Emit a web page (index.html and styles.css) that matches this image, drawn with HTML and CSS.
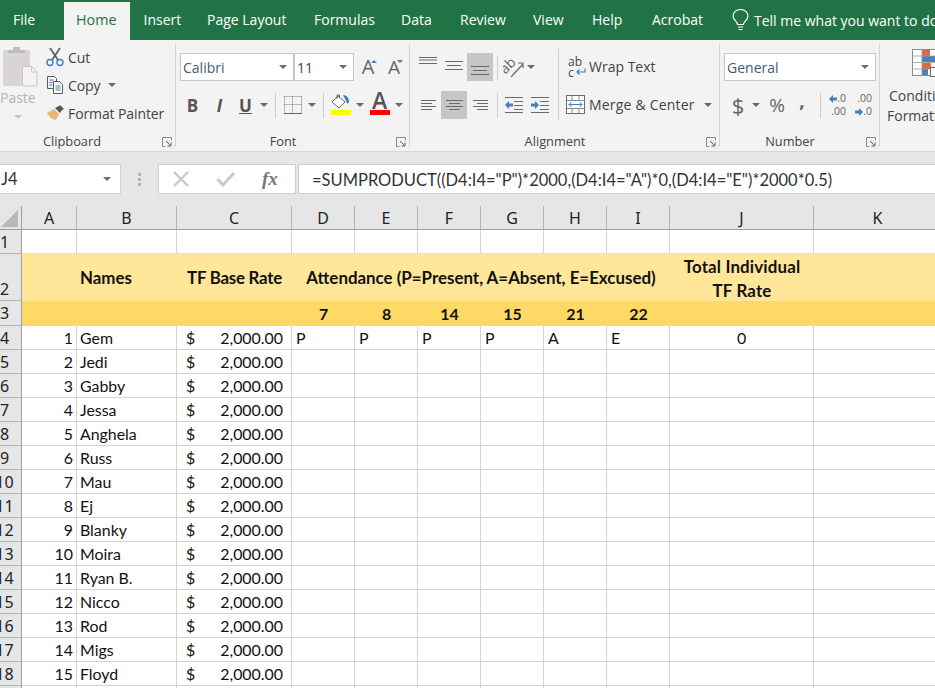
FILE: index.html
```html
<!DOCTYPE html>
<html lang="en">
<head>
<meta charset="utf-8">
<title>Excel attendance sheet</title>
<link rel="stylesheet" href="styles.css">
</head>
<body>
<div class="app">
  <nav class="tabs">
    <span class="tab tab-file">File</span>
    <span class="tab tab-active">Home</span>
    <span class="tab">Insert</span>
    <span class="tab">Page Layout</span>
    <span class="tab">Formulas</span>
    <span class="tab">Data</span>
    <span class="tab">Review</span>
    <span class="tab">View</span>
    <span class="tab">Help</span>
    <span class="tab">Acrobat</span>
    <span class="tell">
      <svg width="17" height="22" viewBox="0 0 17 22" fill="none" stroke="#fff" stroke-width="1.2"><path d="M5.500 15.500c0-3-4.500-4.500-4.500-8.500a7.500 6.500 0 0 1 15 0c0 4-4.500 5.500-4.500 8.500z"/><path d="M6 18h5M6.500 20.500h4"/></svg>
      <span>Tell me what you want to do</span>
    </span>
  </nav>

  <section class="ribbon">
    <div class="group group-clip">
      <div class="group-body clip-body">
        <div class="paste">
          <svg width="36" height="40" viewBox="0 0 36 40"><rect x="0" y="3" width="27" height="36" rx="2" fill="#d9d5d7"/><path d="M5 6V3h5V0h7v3h5v3z" fill="#bdbbbc"/><path d="M19.500 19.500h9l5.500 5.500v14h-14.500z" fill="#f4f0f6" stroke="#c9c9c9"/><path d="M28.500 19.500v5.500h5.500" fill="none" stroke="#c9c9c9"/></svg>
          <span class="paste-label">Paste</span>
          <i class="caret caret-pale"></i>
        </div>
        <div class="clip-list">
          <div class="clip-item">
            <svg width="18" height="20" viewBox="0 0 18 20" fill="none"><path d="M4 1l8 12M14 1L6 13" stroke="#5a5a5a" stroke-width="1.600"/><circle cx="4" cy="15.500" r="3" stroke="#3f7ebf" stroke-width="1.400"/><circle cx="14" cy="15.500" r="3" stroke="#3f7ebf" stroke-width="1.400"/></svg>
            <span>Cut</span>
          </div>
          <div class="clip-item">
            <svg width="18" height="20" viewBox="0 0 18 20" fill="none"><path d="M1.500 1.500h7l2 2v10h-9z" fill="#f3f3f3" stroke="#5a5a5a"/><path d="M7.500 6.500h6l3 3v9h-9z" fill="#fff" stroke="#5a5a5a"/><path d="M3.500 5h4M3.500 7.500h3M3.500 10h3M9.500 11h5M9.500 13h5M9.500 15h5" stroke="#3f7ebf"/></svg>
            <span>Copy</span><i class="caret caret-copy"></i>
          </div>
          <div class="clip-item">
            <svg width="18" height="16" viewBox="0 0 18 16"><path d="M1 8l7-4 5 5-3 6c-3 0-7-3-9-7z" fill="#e8b676"/><path d="M9 3l4-2 1-1 4 4-2 1-2 3z" fill="#555"/></svg>
            <span>Format Painter</span>
          </div>
        </div>
      </div>
      <div class="group-foot foot-clip"><span class="foot-label">Clipboard</span><svg class="launcher" width="10" height="10" viewBox="0 0 10 10" fill="none"><path d="M9.500 3.500V.5H.5v9h3" stroke="#8a8a8a"/><path d="M4 4l4 4M9 5.500V9H5.500" stroke="#5a5a5a"/></svg></div>
    </div>

    <div class="group group-font">
      <div class="group-body rows">
        <div class="font-pick">
          <div class="combo combo-name"><span>Calibri</span><i class="caret"></i></div>
          <div class="combo combo-size"><span>11</span><i class="caret"></i></div>
          <span class="size-btn"><span class="size-a">A</span><i class="mini mini-up"></i></span>
          <span class="size-btn size-btn-2"><span class="size-a size-a-small">A</span><i class="mini mini-down"></i></span>
        </div>
        <div class="font-tools">
          <span class="cell-c glyph glyph-b">B</span>
          <span class="cell-c glyph glyph-i">I</span>
          <span class="cell-c glyph glyph-u">U</span>
          <span class="cell-c"><i class="caret"></i></span>
          <span class="cell-c"><i class="sep"></i></span>
          <span class="cell-c">
            <svg width="18" height="18" viewBox="0 0 18 18" fill="none"><path d="M.5.5h17M.5 8.500h17M.5.5v17M8.500.5v17M17.500.5v17" stroke="#777" stroke-dasharray="1 1"/><path d="M0 17.500h18" stroke="#666"/></svg>
          </span>
          <span class="cell-c"><i class="caret"></i></span>
          <span class="cell-c"><i class="sep"></i></span>
          <span class="cell-c color-tool">
            <svg width="20" height="15" viewBox="0 0 20 15" fill="none"><path d="M1 8l6-6 7 6-6 6z" fill="#fff" stroke="#666"/><path d="M6 5V1h2.500v3" stroke="#666"/><path d="M12 1c4 0 6 3 6 7-1 2-2 2-2.500 0L14 5z" fill="#3f7ebf"/></svg>
            <i class="color-bar bar-yellow"></i>
          </span>
          <span class="cell-c"><i class="caret"></i></span>
          <span class="cell-c color-tool">
            <span class="glyph-a">A</span>
            <i class="color-bar bar-red"></i>
          </span>
          <span class="cell-c"><i class="caret"></i></span>
        </div>
      </div>
      <div class="group-foot"><span class="foot-label">Font</span><svg class="launcher" width="10" height="10" viewBox="0 0 10 10" fill="none"><path d="M9.500 3.500V.5H.5v9h3" stroke="#8a8a8a"/><path d="M4 4l4 4M9 5.500V9H5.500" stroke="#5a5a5a"/></svg></div>
    </div>

    <div class="group group-align">
      <div class="group-body align-body">
        <div class="rows align-left">
          <div class="align-tools">
            <span class="cell-c align-top"><svg width="18" height="8" viewBox="0 0 18 8"><path d="M0 .5h18M0 3h18M0 6.500h18" stroke="#6a6a6a"/></svg></span>
            <span class="cell-c align-mid"><svg width="18" height="10" viewBox="0 0 18 10"><path d="M0 .5h18M2 4.500h14M0 8.500h18" stroke="#6a6a6a"/></svg></span>
            <span class="cell-c on align-bot"><svg width="18" height="10" viewBox="0 0 18 10"><path d="M0 .5h18M2 4.500h14M0 8.500h18" stroke="#6a6a6a"/></svg></span>
            <span class="cell-c"><i class="sep"></i></span>
            <span class="cell-c"><svg width="22" height="22" viewBox="0 0 22 22" fill="none"><text class="orient-text" transform="translate(8 13) rotate(-45)" x="-8" y="0">ab</text><path d="M8 21L20 8M15 7h5v5" stroke="#6a6a6a" stroke-width="1.200"/></svg></span>
            <span class="cell-c cell-start"><i class="caret"></i></span>
          </div>
          <div class="align-tools">
            <span class="cell-c"><svg width="15" height="10" viewBox="0 0 15 10"><path d="M0 .5h15M0 3.500h11M0 6.500h15M0 9.500h11" stroke="#6a6a6a"/></svg></span>
            <span class="cell-c on"><svg width="17" height="10" viewBox="0 0 17 10"><path d="M0 .5h17M3 3.500h11M0 6.500h17M3 9.500h11" stroke="#6a6a6a"/></svg></span>
            <span class="cell-c"><svg width="15" height="10" viewBox="0 0 15 10"><path d="M0 .5h15M4 3.500h11M0 6.500h15M4 9.500h11" stroke="#6a6a6a"/></svg></span>
            <span class="cell-c"><i class="sep"></i></span>
            <span class="cell-c"><svg width="18" height="16" viewBox="0 0 18 16" fill="none"><path d="M0 .5h18M9 4.500h9M9 8.500h9M9 12.500h9M0 15.500h18" stroke="#6a6a6a"/><path d="M0 8l4-4v2.500h4v3H4V12z" fill="#3f7ebf"/></svg></span>
            <span class="cell-c"><svg width="18" height="16" viewBox="0 0 18 16" fill="none"><path d="M0 .5h18M9 4.500h9M9 8.500h9M9 12.500h9M0 15.500h18" stroke="#6a6a6a"/><path d="M8 8L4 4v2.500H0v3h4V12z" fill="#3f7ebf"/></svg></span>
          </div>
        </div>
        <i class="sep-tall"></i>
        <div class="rows align-right">
          <div class="merge-row">
            <span class="wrap-icon"><span class="wrap-ab">ab</span><span class="wrap-c">c<svg width="11" height="8" viewBox="0 0 11 8" fill="none"><path d="M10 .5v3.500H2M4.500 1.500L2 4l2.500 2.500" stroke="#3f7ebf" stroke-width="1.200"/></svg></span></span>
            <span>Wrap Text</span>
          </div>
          <div class="merge-row">
            <svg class="merge-icon" width="19" height="19" viewBox="0 0 19 19" fill="none"><rect x=".5" y=".5" width="18" height="18" fill="#fff" stroke="#6a6a6a"/><path d="M.5 5.500h18M.5 13.500h18M6 .5v5M13 .5v5M6 13.500v5M13 13.500v5" stroke="#8a8a8a"/><path d="M3 9.500h13M5.500 7l-2.500 2.500L5.500 12M13.500 7l2.500 2.500L13.500 12" stroke="#3f7ebf"/></svg>
            <span class="merge-label">Merge &amp; Center</span>
            <i class="caret caret-end"></i>
          </div>
        </div>
      </div>
      <div class="group-foot"><span class="foot-label">Alignment</span><svg class="launcher" width="10" height="10" viewBox="0 0 10 10" fill="none"><path d="M9.500 3.500V.5H.5v9h3" stroke="#8a8a8a"/><path d="M4 4l4 4M9 5.500V9H5.500" stroke="#5a5a5a"/></svg></div>
    </div>

    <div class="group group-num">
      <div class="group-body rows num-body">
        <div class="combo combo-general"><span>General</span><i class="caret"></i></div>
        <div class="num-tools">
          <span class="cell-c glyph-num glyph-dollar">$</span>
          <span class="cell-c"><i class="caret"></i></span>
          <span class="cell-c glyph-num glyph-pct">%</span>
          <span class="cell-c glyph-num glyph-comma">,</span>
          <span class="cell-c"><i class="sep"></i></span>
          <span class="dec"><span class="dec-top"><svg width="8" height="8" viewBox="0 0 8 8"><path d="M0 4l4-4v2.500h4v3H4V8z" fill="#3f7ebf"/></svg>.0</span><span>.00</span></span>
          <span></span>
          <span class="dec"><span>.00</span><span class="dec-top"><svg width="8" height="8" viewBox="0 0 8 8"><path d="M8 4L4 0v2.500H0v3h4V8z" fill="#3f7ebf"/></svg>.0</span></span>
        </div>
      </div>
      <div class="group-foot"><span class="foot-label">Number</span><svg class="launcher" width="10" height="10" viewBox="0 0 10 10" fill="none"><path d="M9.500 3.500V.5H.5v9h3" stroke="#8a8a8a"/><path d="M4 4l4 4M9 5.500V9H5.500" stroke="#5a5a5a"/></svg></div>
    </div>

    <div class="group-cond">
      <svg class="cond-icon" width="40" height="28" viewBox="0 0 40 28"><rect x=".5" y=".5" width="33" height="26" fill="#fff" stroke="#8a8a8a"/><rect x="10" y="1" width="8" height="6" fill="#dc6845"/><rect x="10" y="7" width="24" height="6" fill="#4a7fc0"/><rect x="10" y="14" width="9" height="6" fill="#dc6845"/><rect x="10" y="20" width="6" height="6" fill="#4a7fc0"/><path d="M0 7h34M0 13.500h34M0 20h34M10 0v27" stroke="#9a9a9a" stroke-width=".8"/><rect x="18.500" y="18.500" width="14" height="9" fill="#fff" stroke="#6a6a6a"/></svg>
      <span class="cond-line">Conditional</span>
      <span class="cond-line cond-line-2">Formatting</span>
    </div>
  </section>

  <section class="formula">
    <div class="namebox"><span>J4</span><i class="caret"></i></div>
    <span class="grip"><i></i><i></i><i></i></span>
    <div class="fx-box">
      <svg width="18" height="18" viewBox="0 0 18 18"><path d="M2 2l14 14M16 2L2 16" stroke="#c9c9c9" stroke-width="2.400"/></svg>
      <svg width="20" height="16" viewBox="0 0 20 16" fill="none"><path d="M1.500 8l5.500 6L18 2" stroke="#c9c9c9" stroke-width="3"/></svg>
      <span class="fx">fx</span>
    </div>
    <div class="formula-input">=SUMPRODUCT((D4:I4="P")*2000,(D4:I4="A")*0,(D4:I4="E")*2000*0.5)</div>
  </section>

  <section class="sheet">
    <table class="grid">
      <colgroup><col class="c-rh"><col class="c-a"><col class="c-b"><col class="c-c"><col class="c-d"><col class="c-d"><col class="c-d"><col class="c-d"><col class="c-d"><col class="c-d"><col class="c-j"><col class="c-k"></colgroup>
      <thead>
        <tr>
          <th class="corner"><svg width="17" height="17" viewBox="0 0 17 17"><path d="M17 0v17H0z" fill="#b8b8b8"/></svg></th>
          <th>A</th><th>B</th><th>C</th><th>D</th><th>E</th><th>F</th><th>G</th><th>H</th><th>I</th><th>J</th><th>K</th>
        </tr>
      </thead>
      <tbody>
        <tr class="r1"><th>1</th><td></td><td></td><td></td><td></td><td></td><td></td><td></td><td></td><td></td><td></td><td></td></tr>
        <tr class="r2"><th>2</th><td></td><td>Names</td><td class="mid tf-base">TF Base Rate</td><td class="mid" colspan="6">Attendance (P=Present, A=Absent, E=Excused)</td><td class="mid total"><div class="total-text">Total Individual<br>TF Rate</div></td><td></td></tr>
        <tr class="r3"><th>3</th><td></td><td></td><td></td><td class="mid">7</td><td class="mid">8</td><td class="mid">14</td><td class="mid">15</td><td class="mid">21</td><td class="mid">22</td><td></td><td></td></tr>
        <tr><th>4</th><td class="num">1</td><td>Gem</td><td class="acct"><span>$</span><span>2,000.00</span></td><td>P</td><td>P</td><td>P</td><td>P</td><td>A</td><td>E</td><td class="mid">0</td><td></td></tr>
        <tr><th>5</th><td class="num">2</td><td>Jedi</td><td class="acct"><span>$</span><span>2,000.00</span></td><td></td><td></td><td></td><td></td><td></td><td></td><td></td><td></td></tr>
        <tr><th>6</th><td class="num">3</td><td>Gabby</td><td class="acct"><span>$</span><span>2,000.00</span></td><td></td><td></td><td></td><td></td><td></td><td></td><td></td><td></td></tr>
        <tr><th>7</th><td class="num">4</td><td>Jessa</td><td class="acct"><span>$</span><span>2,000.00</span></td><td></td><td></td><td></td><td></td><td></td><td></td><td></td><td></td></tr>
        <tr><th>8</th><td class="num">5</td><td>Anghela</td><td class="acct"><span>$</span><span>2,000.00</span></td><td></td><td></td><td></td><td></td><td></td><td></td><td></td><td></td></tr>
        <tr><th>9</th><td class="num">6</td><td>Russ</td><td class="acct"><span>$</span><span>2,000.00</span></td><td></td><td></td><td></td><td></td><td></td><td></td><td></td><td></td></tr>
        <tr><th>10</th><td class="num">7</td><td>Mau</td><td class="acct"><span>$</span><span>2,000.00</span></td><td></td><td></td><td></td><td></td><td></td><td></td><td></td><td></td></tr>
        <tr><th>11</th><td class="num">8</td><td>Ej</td><td class="acct"><span>$</span><span>2,000.00</span></td><td></td><td></td><td></td><td></td><td></td><td></td><td></td><td></td></tr>
        <tr><th>12</th><td class="num">9</td><td>Blanky</td><td class="acct"><span>$</span><span>2,000.00</span></td><td></td><td></td><td></td><td></td><td></td><td></td><td></td><td></td></tr>
        <tr><th>13</th><td class="num">10</td><td>Moira</td><td class="acct"><span>$</span><span>2,000.00</span></td><td></td><td></td><td></td><td></td><td></td><td></td><td></td><td></td></tr>
        <tr><th>14</th><td class="num">11</td><td>Ryan B.</td><td class="acct"><span>$</span><span>2,000.00</span></td><td></td><td></td><td></td><td></td><td></td><td></td><td></td><td></td></tr>
        <tr><th>15</th><td class="num">12</td><td>Nicco</td><td class="acct"><span>$</span><span>2,000.00</span></td><td></td><td></td><td></td><td></td><td></td><td></td><td></td><td></td></tr>
        <tr><th>16</th><td class="num">13</td><td>Rod</td><td class="acct"><span>$</span><span>2,000.00</span></td><td></td><td></td><td></td><td></td><td></td><td></td><td></td><td></td></tr>
        <tr><th>17</th><td class="num">14</td><td>Migs</td><td class="acct"><span>$</span><span>2,000.00</span></td><td></td><td></td><td></td><td></td><td></td><td></td><td></td><td></td></tr>
        <tr><th>18</th><td class="num">15</td><td>Floyd</td><td class="acct"><span>$</span><span>2,000.00</span></td><td></td><td></td><td></td><td></td><td></td><td></td><td></td><td></td></tr>
        <tr><th></th><td></td><td></td><td></td><td></td><td></td><td></td><td></td><td></td><td></td><td></td><td></td></tr>
      </tbody>
    </table>
  </section>
</div>
</body>
</html>
```
FILE: styles.css
```css
* { box-sizing: border-box; }
html, body { margin: 0; height: 100%; overflow: hidden; background: #e6e6e6; }
body { font-family: "Open Sans", "Liberation Sans", sans-serif; color: #444; }
.app { width: 935px; height: 688px; overflow: hidden; }
i { display: block; }

/* Tabs */
.tabs { height: 40px; background: #217346; color: #fff; display: grid; grid-template-columns: 64px 66px 63.5px 107px 87px 59px 73px 59px 60px 93.5px 1fr; align-items: end; font-size: 14px; white-space: nowrap; overflow: hidden; }
.tab { height: 38px; line-height: 36px; padding-left: 13.5px; }
.tab-file { padding-left: 13px; }
.tab-active { background: #f3f3f3; color: #217346; padding-left: 12px; font-size: 14.3px; }
.tell { display: flex; align-items: center; gap: 5px; height: 38px; padding-bottom: 2px; }

/* Ribbon */
.ribbon { height: 112px; background: #f3f3f3; border-bottom: 1px solid #d6d6d6; display: flex; font-size: 14px; color: #444; padding-top: 4px; }
.group { height: 103px; border-right: 1px solid #d4d4d4; display: flex; flex-direction: column; flex: none; }
.group-clip { width: 176px; }
.group-font { width: 234px; }
.group-align { width: 310px; }
.group-num { width: 160px; }
.group-body { flex: none; height: 91px; }
.group-foot { display: flex; align-items: center; height: 12px; font-size: 12.8px; color: #444; }
.foot-label { flex: 1; text-align: center; }
.foot-clip { margin-left: -12px; }
.launcher { margin: 1px 3px 0 6px; flex: none; }
.rows { display: flex; flex-direction: column; gap: 10px; padding-top: 9px; }
.cell-c { display: flex; align-items: center; justify-content: center; height: 28px; }
.cell-start { justify-content: flex-start; }

.caret { width: 0; height: 0; border: 4px solid transparent; border-top-color: #6a6a6a; border-bottom: 0; flex: none; }
.caret-pale { border-top-color: #c4c4c4; margin-top: 8px; }
.caret-copy { margin-left: 4px; }
.sep { width: 1px; height: 25px; background: #cfcfcf; }

/* Clipboard */
.clip-body { display: flex; }
.paste { width: 46px; padding: 3px 0 0 3px; display: flex; flex-direction: column; align-items: flex-start; flex: none; }
.paste .caret { margin-left: 11px; }
.paste-label { color: #b4b4b4; margin: 2px 0 0 -3px; line-height: 18px; }
.clip-list { display: flex; flex-direction: column; }
.clip-item { height: 28px; display: flex; align-items: center; gap: 4px; white-space: nowrap; padding-bottom: 2px; letter-spacing: -0.1px; }
.clip-item svg { flex: none; width: 18px; }

/* Font */
.font-pick { display: flex; padding-left: 4px; height: 28px; align-items: center; }
.combo { height: 28px; background: #fff; border: 1px solid #c6c6c6; display: flex; align-items: center; justify-content: space-between; padding: 0 6px 0 2px; color: #444; flex: none; }
.combo-name { width: 114px; }
.combo-size { width: 60px; }
.combo-name span, .combo-general span { color: #455a75; }
.size-btn { width: 26px; height: 28px; display: flex; justify-content: center; position: relative; margin-left: 1px; }
.size-btn-2 { margin-left: 0; }
.size-a { font-size: 20px; color: #666; line-height: 28px; }
.size-a-small { font-size: 19px; }
.mini { position: absolute; top: 7px; right: 4px; width: 0; height: 0; border: 3px solid transparent; }
.mini-up { border-bottom: 3px solid #3f7ebf; border-top: 0; }
.mini-down { border-top: 3px solid #3f7ebf; border-bottom: 0; }
.font-tools { display: grid; grid-template-columns: 27px 27px 25px 12px 11px 24px 14px 9px 25px 14px 25px 14px; margin-left: 3px; }
.glyph { font-size: 17px; color: #555; }
.glyph-b { font-weight: 700; }
.glyph-i { font-style: italic; font-weight: 700; }
.glyph-u { font-weight: 700; text-decoration: underline; }
.color-tool { flex-direction: column; justify-content: flex-start; }
.glyph-a { font-size: 23px; font-weight: 600; color: #555; line-height: 19px; height: 19px; }
.color-tool svg { margin-top: 3px; margin-bottom: 1px; }
.color-bar { width: 20px; height: 5px; flex: none; }
.bar-yellow { background: #ffff00; }
.bar-red { background: #ff0000; }

/* Alignment */
.align-body { display: flex; }
.align-left { width: 148px; padding-left: 5px; flex: none; }
.align-tools { display: grid; grid-template-columns: 26px 26px 26px 8px 26px 26px; height: 28px; }
.on { background: #c6c6c6; }
.align-top { align-items: flex-start; padding-top: 4px; }
.align-mid { padding-bottom: 2px; }
.align-bot { align-items: flex-end; padding-bottom: 5px; }
.orient-text { font-family: "Open Sans", sans-serif; font-size: 14px; fill: #666; }
.sep-tall { width: 1px; height: 72px; background: #cfcfcf; margin-top: 5px; flex: none; }
.align-right { width: 155px; padding-left: 7px; flex: none; }
.merge-row { height: 28px; display: flex; align-items: center; white-space: nowrap; padding-bottom: 1px; }
.merge-icon { margin-right: 4px; flex: none; }
.merge-label { letter-spacing: 0.2px; }
.caret-end { margin-left: 9px; }
.wrap-icon { width: 23px; display: flex; flex-direction: column; line-height: 11px; font-size: 12px; color: #444; padding-left: 2px; flex: none; }
.wrap-c { display: flex; align-items: center; gap: 1px; }

/* Number */
.num-body { padding-left: 4px; }
.combo-general { width: 152px; }
.num-tools { display: grid; grid-template-columns: 28px 8px 34px 16px 20px 16px 10px 16px; height: 28px; }
.glyph-num { font-size: 19px; color: #666; }
.glyph-dollar { font-size: 22px; }
.glyph-comma { font-weight: 700; padding-bottom: 10px; }
.dec { display: flex; flex-direction: column; font-size: 10.5px; line-height: 13px; color: #666; align-items: flex-end; padding-top: 1px; }
.dec-top { display: flex; align-items: center; }

/* Conditional formatting */
.group-cond { flex: none; width: 78px; margin-left: 9px; display: flex; flex-direction: column; align-items: flex-start; white-space: nowrap; }
.cond-icon { margin: 5px 0 9px 23px; flex: none; }
.cond-line { line-height: 20px; }
.cond-line-2 { margin-left: -2px; }

/* Formula bar */
.formula { display: flex; height: 30px; margin-top: 12px; align-items: stretch; font-family: "Lato", sans-serif; font-size: 16.5px; }
.namebox { width: 121px; background: #fff; border: 1px solid #cfcfcf; border-left: 0; display: flex; align-items: center; justify-content: space-between; padding: 0 9px 0 1px; flex: none; color: #333; }
.grip { width: 37px; flex: none; display: flex; flex-direction: column; align-items: center; justify-content: center; gap: 2px; }
.grip i { width: 3px; height: 3px; background: #b4b4b4; }
.fx-box { width: 138px; background: #fff; border: 1px solid #cfcfcf; display: flex; align-items: center; flex: none; padding-left: 13px; gap: 26px; }
.fx { font-family: "Liberation Serif", serif; font-style: italic; font-size: 19px; font-weight: 700; color: #777; }
.formula-input { flex: 1; margin-left: 2px; background: #fff; border: 1px solid #cfcfcf; border-right: 0; padding-left: 13px; line-height: 30px; white-space: nowrap; color: #333; }

/* Sheet */
.sheet { margin-top: 12px; margin-left: -12px; }
.grid { border-collapse: separate; border-spacing: 0; table-layout: fixed; width: 954px; background: #fff; font-family: "Lato", "Liberation Sans", sans-serif; font-size: 15.9px; color: #111; }
.c-rh { width: 34px; }
.c-a { width: 55px; }
.c-b { width: 100px; }
.c-c { width: 115px; }
.c-d { width: 63px; }
.c-j { width: 144px; }
.c-k { width: 128px; }
.grid tr { height: 24px; }
.grid td { padding: 0 4px; border-right: 1px solid #d4d4d4; border-bottom: 1px solid #d4d4d4; white-space: nowrap; overflow: hidden; }
.grid th { font-family: "Noto Sans", sans-serif; font-size: 16px; font-weight: 400; background: #e6e6e6; color: #222; padding: 0; }
.grid thead th { height: 24px; border-right: 1px solid #b4b4b4; border-bottom: 1px solid #9e9e9e; text-align: center; }
.grid tbody th { border-right: 1px solid #9e9e9e; border-bottom: 1px solid #b4b4b4; text-align: center; }
.grid thead .corner { padding: 2px 3px 0 0; vertical-align: top; border-right-color: #9e9e9e; }
.corner svg { display: block; margin: 2px 0 0 auto; }
.grid .r1 { height: 23px; }
.grid .r1 th { height: 23px; border-bottom: 0; }
.grid .r1 td { height: 23px; border-bottom: 0; }
.grid .r2 { height: 48px; }
.grid .r2 th { height: 48px; vertical-align: bottom; border-top: 1px solid #b4b4b4; }
.grid .r2 td { background: #ffe699; border: 0; font-weight: 700; font-size: 16.9px; padding-top: 1px; }
.grid .r3 { height: 25px; }
.grid .r3 td { background: #ffd966; border: 0; font-weight: 700; }
.grid .r3 th { height: 25px; }
.grid td.mid { text-align: center; }
.grid .r2 td.tf-base { letter-spacing: -0.25px; }
.grid .r2 td.total { line-height: 24px; letter-spacing: 0.15px; padding-top: 0; }
.total-text { margin: 2px 0 -2px; }
.grid td.num { text-align: right; padding-right: 3px; }
.grid td.acct { padding: 0 8px 0 9px; }
.acct span:first-child { float: left; }
.acct span:last-child { float: right; }
.grid tbody td:nth-child(3) { padding-left: 3px; }
```
